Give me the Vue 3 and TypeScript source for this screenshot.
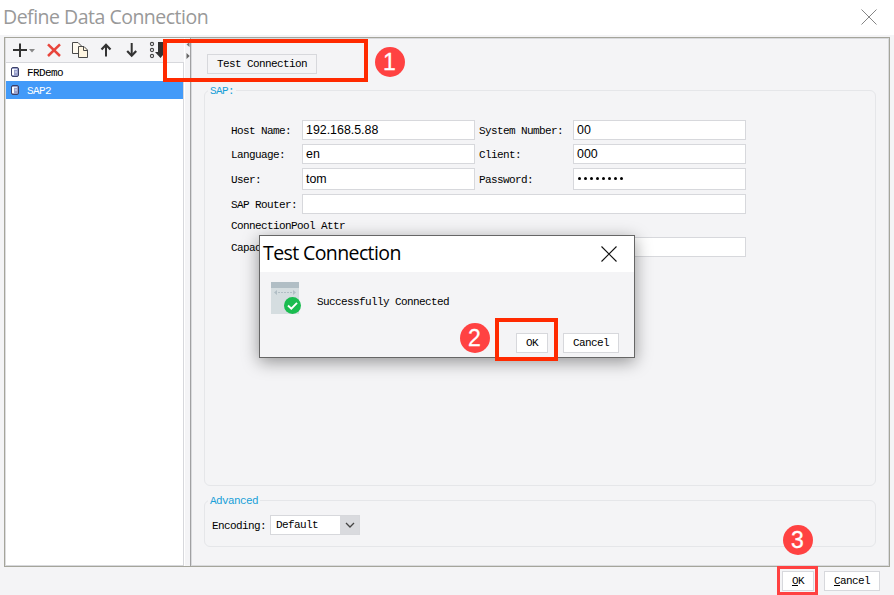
<script setup lang="ts">
import { ref } from 'vue'

interface Connection {
  name: string
}

const connections: Connection[] = [{ name: 'FRDemo' }, { name: 'SAP2' }]
const selected = ref('SAP2')
const form = ref({
  host: '192.168.5.88',
  system: '00',
  language: 'en',
  client: '000',
  user: 'tom',
  passwordLength: 8,
})
</script>

<template>
  <div class="window">
    <header class="titlebar">
      <h1>Define Data Connection</h1>
      <svg class="close" width="16" height="16" viewBox="0 0 16 16">
        <path d="M.5 .5 15.5 15.5M15.5 .5 .5 15.5" stroke="#858585" fill="none" />
      </svg>
    </header>

    <main class="frame">
      <aside class="side">
        <svg class="toolbar" width="178" height="24" viewBox="6 38 178 24">
          <path d="M13 50H27M20 43.5V57" stroke="#333" stroke-width="2" fill="none" />
          <path d="M29 49H35L32 52.5Z" fill="#888" />
          <path d="M48 44.300 60 56M60 44.300 48 56" stroke="#e8453c" stroke-width="2.500" fill="none" />
          <path d="M72.500 42.500H78L81.500 46V53.500H72.500Z" fill="#fffaf0" stroke="#4a4a4a" />
          <path d="M78.500 46.500H84L87.500 50V57.500H78.500Z" fill="#fff6e2" stroke="#4a4a4a" />
          <path d="M83.500 46.500V50.500H87.500" fill="none" stroke="#4a4a4a" />
          <path d="M106 56.500V45" stroke="#333" stroke-width="2" />
          <path d="M101.500 49.500 106 44.800 110.500 49.500" fill="none" stroke="#333" stroke-width="2.200" />
          <path d="M131.700 43V55" stroke="#333" stroke-width="2" />
          <path d="M127.200 51 131.700 55.700 136.200 51" fill="none" stroke="#333" stroke-width="2.200" />
          <g fill="none" stroke="#444" stroke-width="1.100">
            <circle cx="152" cy="44" r="1.600" />
            <circle cx="152" cy="50" r="1.600" />
            <circle cx="152" cy="56" r="1.600" />
          </g>
          <path d="M158 42H163V52H165.500L160.500 58 155 52H158Z" fill="#333" />
        </svg>
        <ul class="list">
          <li
            v-for="c in connections"
            :key="c.name"
            :class="{ active: c.name === selected }"
            @click="selected = c.name"
          >
            <svg width="8" height="10" viewBox="0 0 8 10">
              <rect x=".5" y=".5" width="7" height="9" rx="1.500" fill="#9aa1cb" stroke="#3c4068" />
              <path d="M2 2V8" stroke="#fff" stroke-width="2" />
              <path d="M3 2.500H6M4 5H6" stroke="#e4e7f6" />
            </svg>
            <span>{{ c.name }}</span>
          </li>
        </ul>
      </aside>

      <div class="splitter">
        <svg width="6" height="22" viewBox="0 0 6 22">
          <path d="M4.500 3V8L1.500 5.500Z" fill="#777" />
          <path d="M1.500 14V20L4.700 17Z" fill="#666" />
        </svg>
      </div>

      <section class="content">
        <button class="btn test">Test Connection</button>

        <div class="group sap">
          <div class="legend"><span>SAP:</span></div>
          <div class="form">
            <label>Host Name:</label>
            <div class="input">{{ form.host }}</div>
            <label class="second">System Number:</label>
            <div class="input">{{ form.system }}</div>

            <label>Language:</label>
            <div class="input">{{ form.language }}</div>
            <label class="second">Client:</label>
            <div class="input">{{ form.client }}</div>

            <label>User:</label>
            <div class="input">{{ form.user }}</div>
            <label class="second">Password:</label>
            <div class="input dots"><i v-for="n in form.passwordLength" :key="n"></i></div>

            <label>SAP Router:</label>
            <div class="input wide"></div>
          </div>
          <div class="pool-title">ConnectionPool Attr</div>
          <div class="form pool">
            <label>Capac</label>
            <div class="input wide"></div>
          </div>
        </div>

        <div class="group advanced">
          <div class="legend"><span>Advanced</span></div>
          <div class="encoding">
            <label>Encoding:</label>
            <div class="select">
              <span>Default</span>
              <div class="arrow">
                <svg width="10" height="6" viewBox="0 0 10 6">
                  <path d="M1 1 5 5 9 1" stroke="#444" stroke-width="1.300" fill="none" />
                </svg>
              </div>
            </div>
          </div>
        </div>
      </section>
    </main>

    <footer class="actions">
      <button class="btn ok"><u>O</u>K</button>
      <button class="btn cancel"><u>C</u>ancel</button>
    </footer>

    <div class="dialog">
      <div class="dialog-title">
        <h2>Test Connection</h2>
        <svg width="16" height="16" viewBox="0 0 16 16">
          <path d="M.5 .5 15.500 15.500M15.500 .5 .5 15.500" stroke="#111" stroke-width="1.100" fill="none" />
        </svg>
      </div>
      <div class="message">
        <svg width="31" height="33" viewBox="0 0 31 33">
          <rect width="28" height="32" fill="#d5dde0" />
          <rect width="28" height="6" fill="#b1bec5" />
          <path d="M7 10.500H21" stroke="#b1bec5" stroke-dasharray="2 1" />
          <path d="M3 10.500 6 8V13ZM25 10.500 22 8V13Z" fill="#b1bec5" />
          <circle cx="21.500" cy="23.500" r="8.500" fill="#1abc50" />
          <path d="M17 23.500 20.300 26.700 26 20.800" stroke="#fff" stroke-width="1.900" fill="none" />
        </svg>
        <span>Successfully Connected</span>
      </div>
      <div class="dialog-actions">
        <button class="btn ok">OK</button>
        <button class="btn cancel">Cancel</button>
      </div>
    </div>

    <div class="mark mark-1"></div>
    <div class="mark mark-2"></div>
    <div class="mark mark-3"></div>
    <div class="badge badge-1">1</div>
    <div class="badge badge-2">2</div>
    <div class="badge badge-3">3</div>
  </div>
</template>

<style>
body {
  margin: 0;
  overflow: hidden;
}
</style>

<style scoped>
* {
  box-sizing: border-box;
}
.window {
  position: relative;
  display: flex;
  flex-direction: column;
  width: 894px;
  height: 595px;
  overflow: hidden;
  background: #f4f4f6;
  color: #000;
  font: 11px/14px 'Liberation Mono', monospace;
  letter-spacing: -0.6px;
  white-space: nowrap;
}
.titlebar {
  display: flex;
  flex: none;
  justify-content: space-between;
  height: 35px;
  padding: 0 17px 0 3px;
  background: #fff;
}
h1,
h2 {
  margin: 0;
  font: 400 19.500px/33px 'Open Sans', sans-serif;
  letter-spacing: -0.500px;
}
h1 {
  color: #999;
}
h2 {
  line-height: 34px;
  letter-spacing: -0.600px;
}
.close {
  margin-top: 9px;
}
.frame {
  display: flex;
  flex: none;
  height: 530px;
  margin: 2px 4px 0;
  border: 1px solid #a5a59b;
}
.side {
  display: flex;
  flex-direction: column;
  width: 179px;
  border-left: 1px solid #dcdcde;
}
.toolbar {
  flex: none;
}
.list {
  flex: 1;
  margin: 0;
  padding: 0;
  list-style: none;
  background: #fff;
  border: 1px solid #d7d8dc;
  border-left: 0;
}
.list li {
  display: flex;
  align-items: center;
  gap: 8px;
  height: 18px;
  padding: 0 5px;
}
.list li span {
  padding-top: 1px;
}
.list li.active {
  background: #429af9;
  color: #fff;
}
.splitter {
  width: 7px;
  padding-top: 1px;
  border-left: 1px solid #fff;
  border-right: 1px solid #a0a0a2;
}
.splitter svg {
  display: block;
}
.content {
  flex: 1;
  padding: 15px 12px 0 13px;
  border: 1px solid #d9dadd;
}
.btn {
  display: block;
  height: 20px;
  padding: 1px 0 0;
  border: 1px solid #d7d8dc;
  background: #fff;
  color: #000;
  font: inherit;
  line-height: 17px;
  letter-spacing: inherit;
  text-align: center;
}
.test {
  width: 110px;
  margin-left: 2px;
  background: #f4f4f6;
}
.ok {
  width: 32px;
}
.cancel {
  width: 56px;
}
.group {
  border: 1px solid #e5e6e9;
  border-radius: 6px;
}
.legend {
  height: 14px;
  margin: -7px 0 0 3px;
  color: #189fd8;
}
.legend span {
  display: inline-block;
  padding: 0 2px;
  background: #f4f4f6;
}
.sap {
  width: 672px;
  height: 396px;
  margin: 16px 0 0 -1px;
}
.form {
  display: grid;
  grid-template-columns: 71px 173px 98px 173px;
  grid-template-rows: 20px 20px 22px 20px;
  row-gap: 4px;
  align-items: stretch;
  margin: 22px 0 0 26px;
}
label {
  display: flex;
  align-items: center;
  padding-top: 2px;
}
.form .second {
  padding-left: 4px;
}
.input {
  display: flex;
  align-items: center;
  padding-left: 3px;
  border: 1px solid #d7d8dc;
  background: #fff;
  font: 12.400px/16px 'Liberation Sans', sans-serif;
  letter-spacing: 0;
}
.wide {
  grid-column: 2 / 5;
}
.dots {
  gap: 3px;
  padding: 0 0 2px 4px;
}
.dots i {
  width: 3px;
  height: 3px;
  border-radius: 50%;
  background: #000;
}
.pool-title {
  height: 23px;
  margin-left: 26px;
  line-height: 24px;
}
.pool {
  grid-template-rows: 20px;
  margin-top: 0;
}
.advanced {
  width: 672px;
  height: 47px;
  margin: 14px 0 0 -1px;
}
.encoding {
  display: flex;
  margin: 7px 0 0 7px;
}
.encoding label {
  width: 58px;
}
.select {
  display: flex;
  justify-content: space-between;
  width: 90px;
  height: 20px;
  border: 1px solid #d7d8dc;
  background: #fff;
  line-height: 19px;
}
.select span {
  padding-left: 5px;
}
.arrow {
  display: flex;
  align-items: center;
  justify-content: center;
  width: 19px;
  background: #d9dade;
}
.actions {
  display: flex;
  justify-content: flex-end;
  gap: 10px;
  padding: 4px 14px 0 0;
}
.dialog {
  position: absolute;
  left: 259px;
  top: 235px;
  width: 376px;
  height: 123px;
  border: 1px solid #666;
  background: #f4f4f6;
  box-shadow: 0 4px 16px rgba(0, 0, 0, 0.4);
}
.dialog-title {
  display: flex;
  justify-content: space-between;
  height: 36px;
  padding: 0 17px 0 3px;
  background: #fff;
}
.dialog-title svg {
  margin-top: 10px;
}
.message {
  display: flex;
  gap: 15px;
  height: 61px;
  padding: 10px 0 0 11px;
}
.message span {
  margin-top: 13px;
  line-height: 14px;
  height: 14px;
}
.dialog-actions {
  display: flex;
  justify-content: flex-end;
  gap: 15px;
  padding-right: 15px;
}
.mark {
  position: absolute;
  border: 4px solid #ff2a00;
}
.mark-1 {
  left: 163px;
  top: 39px;
  width: 205px;
  height: 43px;
}
.mark-2 {
  left: 495px;
  top: 318px;
  width: 63px;
  height: 43px;
}
.mark-3 {
  left: 777px;
  top: 566px;
  width: 41px;
  height: 29px;
  border: 3px solid #ff4141;
}
.badge {
  position: absolute;
  width: 30px;
  height: 30px;
  border-radius: 50%;
  background: #ff4242;
  color: #fff;
  font: 23px/30px 'Liberation Sans', sans-serif;
  letter-spacing: 0;
  text-align: center;
  -webkit-text-stroke: 0.3px #fff;
}
.badge-1 {
  left: 374.500px;
  top: 46.500px;
}
.badge-2 {
  left: 459.500px;
  top: 322.500px;
}
.badge-3 {
  left: 782.500px;
  top: 524.500px;
}
</style>
